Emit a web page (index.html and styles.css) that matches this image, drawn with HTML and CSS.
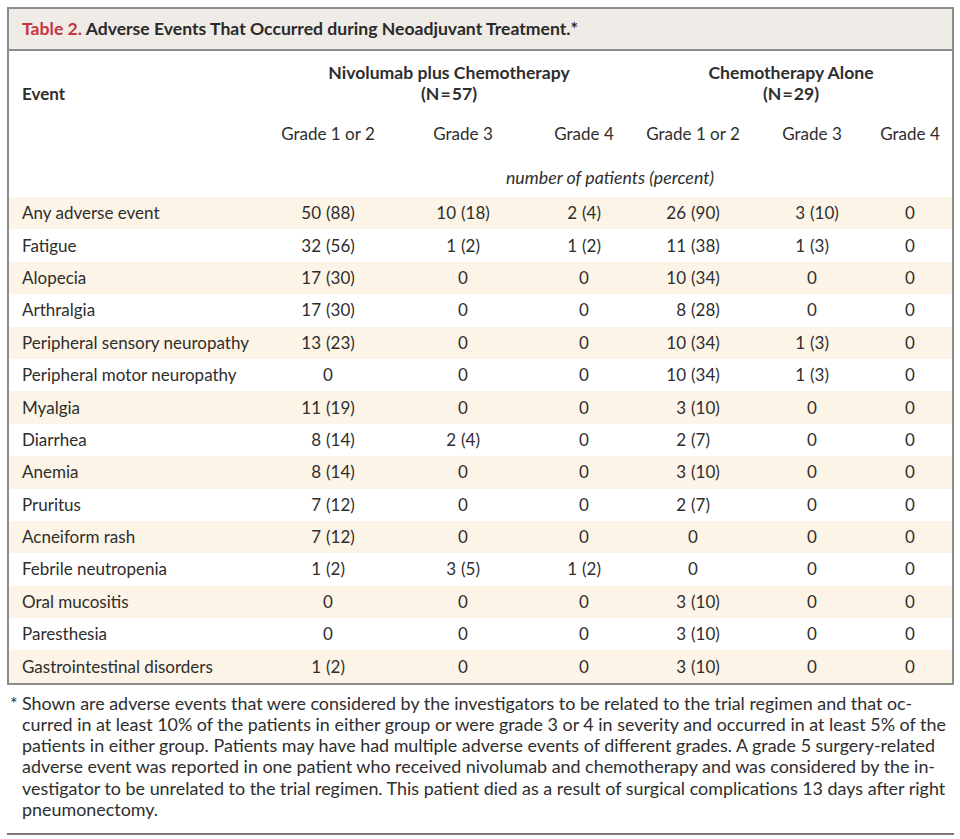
FILE: index.html
```html
<!DOCTYPE html>
<html lang="en">
<head>
<meta charset="utf-8">
<title>Table 2. Adverse Events</title>
<link rel="stylesheet" href="styles.css">
</head>
<body>
<div class="page">
  <div class="box">
    <div class="caption"><span class="tno">Table 2.</span> Adverse Events That Occurred during Neoadjuvant Treatment.*</div>
    <table class="tbl">
      <colgroup>
        <col class="c-ev"><col class="c1"><col class="c2"><col class="c3"><col class="c4"><col class="c5"><col class="c6">
      </colgroup>
      <thead>
        <tr class="grp">
          <th class="ev">Event</th>
          <th colspan="3">Nivolumab plus Chemotherapy<br>(N&#8202;=&#8202;57)</th>
          <th colspan="3">Chemotherapy Alone<br>(N&#8202;=&#8202;29)</th>
        </tr>
        <tr class="grades">
          <th></th>
          <th>Grade 1 or 2</th><th>Grade 3</th><th>Grade 4</th>
          <th>Grade 1 or 2</th><th>Grade 3</th><th>Grade 4</th>
        </tr>
        <tr class="units">
          <th></th>
          <th colspan="6">number of patients (percent)</th>
        </tr>
      </thead>
      <tbody>
        <tr><td>Any adverse event</td><td><span class="v"><span class="a">50</span><span class="b">(88)</span></span></td><td><span class="v"><span class="a">10</span><span class="b">(18)</span></span></td><td><span class="v"><span class="a">2</span><span class="b">(4)</span></span></td><td><span class="v"><span class="a">26</span><span class="b">(90)</span></span></td><td><span class="v"><span class="a">3</span><span class="b">(10)</span></span></td><td>0</td></tr>
        <tr><td>Fatigue</td><td><span class="v"><span class="a">32</span><span class="b">(56)</span></span></td><td><span class="v"><span class="a">1</span><span class="b">(2)</span></span></td><td><span class="v"><span class="a">1</span><span class="b">(2)</span></span></td><td><span class="v"><span class="a">11</span><span class="b">(38)</span></span></td><td><span class="v"><span class="a">1</span><span class="b">(3)</span></span></td><td>0</td></tr>
        <tr><td>Alopecia</td><td><span class="v"><span class="a">17</span><span class="b">(30)</span></span></td><td>0</td><td>0</td><td><span class="v"><span class="a">10</span><span class="b">(34)</span></span></td><td>0</td><td>0</td></tr>
        <tr><td>Arthralgia</td><td><span class="v"><span class="a">17</span><span class="b">(30)</span></span></td><td>0</td><td>0</td><td><span class="v"><span class="a">8</span><span class="b">(28)</span></span></td><td>0</td><td>0</td></tr>
        <tr><td>Peripheral sensory neuropathy</td><td><span class="v"><span class="a">13</span><span class="b">(23)</span></span></td><td>0</td><td>0</td><td><span class="v"><span class="a">10</span><span class="b">(34)</span></span></td><td><span class="v"><span class="a">1</span><span class="b">(3)</span></span></td><td>0</td></tr>
        <tr><td>Peripheral motor neuropathy</td><td>0</td><td>0</td><td>0</td><td><span class="v"><span class="a">10</span><span class="b">(34)</span></span></td><td><span class="v"><span class="a">1</span><span class="b">(3)</span></span></td><td>0</td></tr>
        <tr><td>Myalgia</td><td><span class="v"><span class="a">11</span><span class="b">(19)</span></span></td><td>0</td><td>0</td><td><span class="v"><span class="a">3</span><span class="b">(10)</span></span></td><td>0</td><td>0</td></tr>
        <tr><td>Diarrhea</td><td><span class="v"><span class="a">8</span><span class="b">(14)</span></span></td><td><span class="v"><span class="a">2</span><span class="b">(4)</span></span></td><td>0</td><td><span class="v"><span class="a">2</span><span class="b">(7)</span></span></td><td>0</td><td>0</td></tr>
        <tr><td>Anemia</td><td><span class="v"><span class="a">8</span><span class="b">(14)</span></span></td><td>0</td><td>0</td><td><span class="v"><span class="a">3</span><span class="b">(10)</span></span></td><td>0</td><td>0</td></tr>
        <tr><td>Pruritus</td><td><span class="v"><span class="a">7</span><span class="b">(12)</span></span></td><td>0</td><td>0</td><td><span class="v"><span class="a">2</span><span class="b">(7)</span></span></td><td>0</td><td>0</td></tr>
        <tr><td>Acneiform rash</td><td><span class="v"><span class="a">7</span><span class="b">(12)</span></span></td><td>0</td><td>0</td><td>0</td><td>0</td><td>0</td></tr>
        <tr><td>Febrile neutropenia</td><td><span class="v"><span class="a">1</span><span class="b">(2)</span></span></td><td><span class="v"><span class="a">3</span><span class="b">(5)</span></span></td><td><span class="v"><span class="a">1</span><span class="b">(2)</span></span></td><td>0</td><td>0</td><td>0</td></tr>
        <tr><td>Oral mucositis</td><td>0</td><td>0</td><td>0</td><td><span class="v"><span class="a">3</span><span class="b">(10)</span></span></td><td>0</td><td>0</td></tr>
        <tr><td>Paresthesia</td><td>0</td><td>0</td><td>0</td><td><span class="v"><span class="a">3</span><span class="b">(10)</span></span></td><td>0</td><td>0</td></tr>
        <tr><td>Gastrointestinal disorders</td><td><span class="v"><span class="a">1</span><span class="b">(2)</span></span></td><td>0</td><td>0</td><td><span class="v"><span class="a">3</span><span class="b">(10)</span></span></td><td>0</td><td>0</td></tr>
      </tbody>
    </table>
  </div>
  <div class="note">
    <span class="star">*</span>
    <p>Shown are adverse events that were considered by the investigators to be related to the trial regimen and that oc-<br>curred in at least 10% of the patients in either group or were grade 3 or 4 in severity and occurred in at least 5% of the<br>patients in either group. Patients may have had multiple adverse events of different grades. A grade 5 surgery-related<br>adverse event was reported in one patient who received nivolumab and chemotherapy and was considered by the in-<br>vestigator to be unrelated to the trial regimen. This patient died as a result of surgical complications 13 days after right<br>pneumonectomy.</p>
  </div>
</div>
</body>
</html>
```

FILE: styles.css
```css
html, body {
  margin: 0;
  padding: 0;
  background: #ffffff;
}

body {
  font-family: Lato, "Open Sans", "Liberation Sans", sans-serif;
  color: #2e2e2e;
  font-size: 17px;
}

.page {
  width: 947px;
  padding: 7px 0 0 7px;
}

.box {
  border: 2px solid #8c8c8c;
}

.caption {
  height: 40px;
  line-height: 40px;
  background: #efebe7;
  border-bottom: 2px solid #8c8c8c;
  padding-left: 13px;
  font-weight: 700;
  font-size: 17.6px;
  color: #2a2a2a;
  white-space: nowrap;
}

.tno {
  color: #c4343f;
}

.tbl {
  width: 100%;
  table-layout: fixed;
  border-collapse: collapse;
  border-spacing: 0;
}

.c-ev { width: 259px; }
.c1 { width: 120px; }
.c2 { width: 150px; }
.c3 { width: 92px; }
.c4 { width: 126px; }
.c5 { width: 112px; }
.c6 { width: 84px; }

.tbl th {
  padding: 0;
  text-align: center;
  font-weight: 400;
  line-height: 21px;
  white-space: nowrap;
}

.grp th {
  font-weight: 700;
  font-size: 17.6px;
  padding-top: 11px;
  vertical-align: top;
}

.grp th.ev {
  font-size: 17px;
  text-align: left;
  padding-left: 13px;
  vertical-align: bottom;
}

.grades th {
  padding-top: 19px;
}

.units th {
  padding-top: 23px;
  padding-bottom: 9px;
  font-style: italic;
  font-size: 17.8px;
}

.tbl td {
  height: 32.4px;
  padding: 0;
  text-align: center;
  vertical-align: middle;
  line-height: 20px;
  white-space: nowrap;
}

.tbl td:first-child {
  text-align: left;
  padding-left: 13px;
}

.tbl tbody tr:nth-child(odd) td {
  background: #fcf4e6;
}

.v {
  display: inline-flex;
}

.v .a {
  width: 28px;
  padding-right: 5px;
  box-sizing: border-box;
  text-align: right;
}

.v .b {
  width: 32px;
  text-align: left;
}

.note {
  display: flex;
  margin-top: 8px;
  padding-bottom: 13px;
  border-bottom: 2px solid #7a7a7a;
  line-height: 21.2px;
  font-size: 17.9px;
}

.star {
  width: 15px;
  padding-left: 3px;
  box-sizing: border-box;
  flex: none;
}

.note p {
  margin: 0;
  white-space: nowrap;
}
```
